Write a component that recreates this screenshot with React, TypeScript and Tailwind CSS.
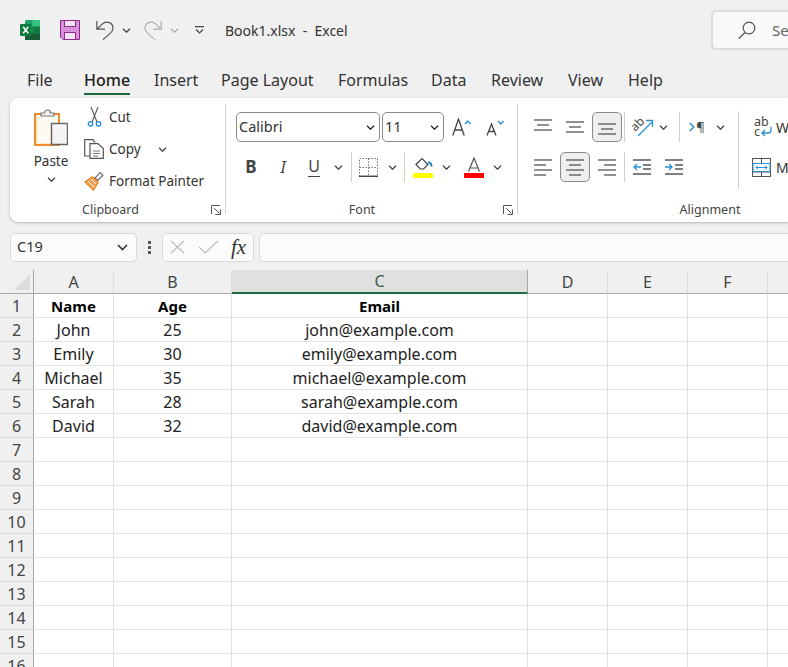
import type { ReactNode } from "react";

const tabs = [
  { label: "File", width: "w-[57px]" },
  { label: "Home", width: "w-[70px]", active: true },
  { label: "Insert", width: "w-[67px]" },
  { label: "Page Layout", width: "w-[117px]" },
  { label: "Formulas", width: "w-[93px]" },
  { label: "Data", width: "w-[60px]" },
  { label: "Review", width: "w-[77px]" },
  { label: "View", width: "w-[60px]" },
  { label: "Help", width: "w-[60px]" },
];

const rows = [
  ["Name", "Age", "Email"],
  ["John", "25", "john@example.com"],
  ["Emily", "30", "emily@example.com"],
  ["Michael", "35", "michael@example.com"],
  ["Sarah", "28", "sarah@example.com"],
  ["David", "32", "david@example.com"],
];

const rowNumbers = Array.from({ length: 16 }, (_, i) => i + 1);

const Chev = ({ color = "#444" }: { readonly color?: string }) => (
  <svg className="shrink-0" fill="none" height="5" viewBox="0 0 9 5" width="9">
    <path d="M1 .7l3.5 3.5L8 .7" stroke={color} strokeWidth="1.3" />
  </svg>
);

const Slot = ({
  width,
  children,
}: {
  readonly width: string;
  readonly children?: ReactNode;
}) => (
  <div className={`flex h-[30px] shrink-0 items-center justify-center ${width}`}>
    {children}
  </div>
);

const Sep = () => <div className="h-[30px] w-px shrink-0 bg-[#d0d0d0]" />;

const Launcher = () => (
  <svg fill="none" height="10" viewBox="0 0 10 10" width="10">
    <path d="M.5 9V.5H9" stroke="#555" />
    <path d="M3 3l5.5 5.5M9.5 4.500v5h-5" stroke="#555" />
  </svg>
);

const GroupLabel = ({
  label,
  launcherWidth,
}: {
  readonly label: string;
  readonly launcherWidth?: string;
}) => (
  <div className="flex items-center text-[12.5px] leading-[16px] text-[#444]">
    <span className="flex-1 text-center">{label}</span>
    {launcherWidth ? (
      <div className={`flex shrink-0 justify-end pr-[4px] ${launcherWidth}`}>
        <Launcher />
      </div>
    ) : null}
  </div>
);

const Lines = ({
  rows: lineRows,
}: {
  readonly rows: readonly (readonly [number, number, number])[];
}) => (
  <svg fill="none" height="18" viewBox="0 0 18 18" width="18">
    {lineRows.map(([x1, x2, y]) => (
      <path d={`M${x1} ${y}H${x2}`} key={`${x1}-${y}`} stroke="#555" strokeWidth="1.3" />
    ))}
  </svg>
);

const ExcelIcon = () => (
  <svg className="shrink-0" height="20" viewBox="0 0 20 20" width="20">
    <rect fill="#21a366" height="20" rx="1.5" width="15" x="5" />
    <rect fill="#33c481" height="6.6" width="7.5" x="12.5" />
    <rect fill="#107c41" height="6.8" width="7.5" x="12.5" y="6.6" />
    <rect fill="#185c37" height="6.6" width="15" x="5" y="13.4" />
    <rect fill="#107c41" height="12" rx="1" width="11.5" x="0" y="4" />
    <path d="M3.2 6.800l2.500 3.200-2.500 3.200M8.300 6.800L5.700 10l2.600 3.200" fill="none" stroke="#fff" strokeWidth="1.5" />
  </svg>
);

const SaveIcon = () => (
  <svg className="shrink-0" height="20" viewBox="0 0 20 20" width="20">
    <path d="M.5.500h19v19H3l-2.500-2.500z" fill="#d98fd9" stroke="#8f2a8f" />
    <rect fill="#f4e4f4" height="6" stroke="#8f2a8f" width="11" x="4.500" y=".5" />
    <rect fill="#f4e4f4" height="7" stroke="#8f2a8f" width="11" x="4.500" y="12.500" />
  </svg>
);

const UndoIcon = ({
  color,
  flip = false,
}: {
  readonly color: string;
  readonly flip?: boolean;
}) => (
  <svg className={flip ? "shrink-0 -scale-x-100" : "shrink-0"} fill="none" height="20" viewBox="0 0 18 20" width="18">
    <path d="M.8 1v8.200H9M.8 9.200L7 3.400c4-3 10-.5 10 4.600 0 2.600-1.300 4-3 5.600L7 19.600" stroke={color} strokeWidth="1.2" />
  </svg>
);

const PasteIcon = () => (
  <svg fill="none" height="39" viewBox="0 0 34 39" width="34">
    <path d="M1 6h24v31H1z" fill="#fde9c9" stroke="#ed8b2e" strokeWidth="2" />
    <path d="M4 7h20v28H4z" fill="#fff" opacity=".75" />
    <path d="M7 8V5h3.500a3 3 0 016 0H20v3z" fill="#f3f3f3" stroke="#777" strokeWidth="1.2" />
    <path d="M17.500 15.500h16v21h-16z" fill="#f5f5f5" stroke="#666" strokeWidth="1.5" />
  </svg>
);

const CutIcon = () => (
  <svg fill="none" height="20" viewBox="0 0 15 20" width="15">
    <path d="M4 0l6 15M11 0L5 15" stroke="#555" strokeWidth="1.1" />
    <circle cx="3.500" cy="16.800" r="2.200" stroke="#2b8fd6" strokeWidth="1.3" />
    <circle cx="11.500" cy="16.800" r="2.200" stroke="#2b8fd6" strokeWidth="1.3" />
  </svg>
);

const CopyIcon = () => (
  <svg fill="none" height="20" viewBox="0 0 20 20" width="20">
    <path d="M6 17H.7V.7H9l2 3" stroke="#555" strokeWidth="1.2" />
    <path d="M6 4.600h8l5.300 5v9.700H6z" fill="#fff" stroke="#555" strokeWidth="1.2" />
    <path d="M9 12h7M9 14.500h7M9 17h5" stroke="#777" />
  </svg>
);

const PainterIcon = () => (
  <svg fill="none" height="19" viewBox="0 0 20 19" width="20">
    <path d="M11 6l3-3 2-2.500 3 2.800-2.400 2.200-3 3z" fill="#fff" stroke="#666" strokeWidth="1.1" />
    <path d="M.5 10L8.500 4.500l6 5.500-5 8.500z" fill="#f2a04c" stroke="#e27a1d" strokeWidth="1" />
    <path d="M4 9l6 6M7 7l5 5" stroke="#fff" strokeWidth="1" />
  </svg>
);

const GrowIcon = ({ up }: { readonly up: boolean }) => (
  <svg fill="none" height="18" viewBox="0 0 20 18" width="20">
    <path d={up ? "M.8 17.500L6.500 1l5.700 16.500M2.600 12h7.800" : "M1 17.500L5.500 6 10 17.500M2.500 13.500h6"} stroke="#444" strokeWidth="1.3" />
    <path d={up ? "M13 6l2.700-3 2.800 3" : "M12 3l2.700 3L17.500 3"} stroke="#2b8fd6" strokeWidth="1.4" />
  </svg>
);

const BorderIcon = () => (
  <svg fill="none" height="19" viewBox="0 0 19 19" width="19">
    <path d="M.5.500h18v18H.5zM9.500.500v18M.5 9.500h18" stroke="#777" strokeDasharray="1.500 1.500" />
    <path d="M0 18.300h19" stroke="#444" strokeWidth="1.500" />
  </svg>
);

const FillIcon = () => (
  <svg fill="none" height="21" viewBox="0 0 20 21" width="20">
    <path d="M3 7.500L9 1.500l6 6-4.500 4.500h-3z" stroke="#444" strokeWidth="1.200" />
    <path d="M15 5.500c2-.5 3.500 1 3.500 4" stroke="#1f7fc4" strokeWidth="2" />
    <rect fill="#ffff00" height="5" width="20" y="16" />
  </svg>
);

const ColorIcon = () => (
  <svg fill="none" height="21" viewBox="0 0 20 21" width="20">
    <path d="M4.500 14.500L10 1l5.500 13.500M6 11h8" stroke="#555" strokeWidth="1.200" />
    <rect fill="#ff0000" height="5" width="20" y="16" />
  </svg>
);

const OrientIcon = () => (
  <svg className="overflow-visible" fill="none" height="20" viewBox="0 0 21 20" width="21">
    <text fill="#444" fontFamily="Noto Sans, sans-serif" fontSize="12" textAnchor="middle" transform="rotate(-45 6 8)" x="6" y="11">
      ab
    </text>
    <path d="M6 19L20 5M14 3.500h6.500V10" stroke="#2b8fd6" strokeWidth="1.300" />
  </svg>
);

const IndentIcon = ({ flip }: { readonly flip: boolean }) => (
  <svg fill="none" height="18" viewBox="0 0 18 18" width="18">
    <path d="M0 2h18M10 7h8M10 11h8M0 16h18" stroke="#555" strokeWidth="1.300" />
    <path d={flip ? "M8 9H1M4 6L1 9l3 3" : "M0 9h7M4 6l3 3-3 3"} stroke="#2b8fd6" strokeWidth="1.300" />
  </svg>
);

const WrapIcon = () => (
  <svg className="overflow-visible" fill="none" height="20" viewBox="0 0 18 20" width="18">
    <text fill="#444" fontFamily="Noto Sans, sans-serif" fontSize="12.500">
      <tspan x="0" y="9">
        ab
      </tspan>
      <tspan x="0" y="19">
        c
      </tspan>
    </text>
    <path d="M17 10v3c0 2-1 3-3 3H8M11 13l-3 3 3 3" stroke="#2b8fd6" strokeWidth="1.300" />
  </svg>
);

const MergeIcon = () => (
  <svg fill="none" height="19" viewBox="0 0 19 19" width="19">
    <rect fill="#fff" height="18" stroke="#555" width="18" x=".5" y=".5" />
    <path d="M1 5.500h17M1 14h17M9.500 1v4M9.500 14v4" stroke="#555" />
    <rect height="8" stroke="#2b8fd6" width="17" x="1" y="5.500" />
    <path d="M4 9.500h11M6 7.500l-2 2 2 2M13 7.500l2 2-2 2" stroke="#2b8fd6" />
  </svg>
);

const ClipboardGroup = () => (
  <div className="mt-[6px] h-[110px] w-[216px] shrink-0 border-r border-[#d0d0d0]">
    <div className="flex h-[98px] pl-[20px]">
      <div className="flex w-[42px] flex-col items-center pt-[4px]">
        <PasteIcon />
        <span className="mt-[5px] text-[13.5px] leading-[18px]">Paste</span>
        <div className="mt-[7px]">
          <Chev />
        </div>
      </div>
      <div className="ml-[12px] flex flex-col gap-[6px] text-[13.5px]">
        <div className="flex h-[26px] items-center">
          <div className="flex w-[20px] justify-center">
            <CutIcon />
          </div>
          <span className="ml-[5px]">Cut</span>
        </div>
        <div className="flex h-[26px] items-center">
          <div className="flex w-[20px] justify-center">
            <CopyIcon />
          </div>
          <span className="ml-[5px]">Copy</span>
          <div className="ml-[17px]">
            <Chev />
          </div>
        </div>
        <div className="flex h-[26px] items-center">
          <div className="flex w-[20px] justify-center">
            <PainterIcon />
          </div>
          <span className="ml-[5px] whitespace-nowrap">Format Painter</span>
        </div>
      </div>
    </div>
    <GroupLabel label="Clipboard" launcherWidth="w-[14px]" />
  </div>
);

const FakeSelect = ({
  value,
  width,
}: {
  readonly value: string;
  readonly width: string;
}) => (
  <div
    className={`flex h-[30px] shrink-0 items-center justify-between rounded-[5px] border border-[#8a8a8a] pl-[2px] pr-[4px] text-[14.5px] text-[#333] ${width}`}
  >
    <span>{value}</span>
    <Chev color="#222" />
  </div>
);

const FontGroup = () => (
  <div className="mt-[6px] h-[110px] w-[292px] shrink-0 border-r border-[#d0d0d0]">
    <div className="h-[98px] pl-[10px] pt-[8px]">
      <div className="flex items-center">
        <FakeSelect value="Calibri" width="w-[144px]" />
        <div className="ml-[2px]">
          <FakeSelect value="11" width="w-[62px]" />
        </div>
        <div className="ml-[8px]">
          <GrowIcon up />
        </div>
        <div className="ml-[14px]">
          <GrowIcon up={false} />
        </div>
      </div>
      <div className="mt-[10px] flex items-center text-[#444]">
        <Slot width="w-[30px]">
          <span className="text-[17px] font-bold">B</span>
        </Slot>
        <Slot width="w-[34px]">
          <span className="text-[16px] italic">I</span>
        </Slot>
        <Slot width="w-[28px]">
          <span className="border-b border-[#444] text-[16px] leading-[19px]">U</span>
        </Slot>
        <Slot width="w-[20px]">
          <Chev />
        </Slot>
        <div className="ml-[3px]">
          <Sep />
        </div>
        <Slot width="w-[33px]">
          <BorderIcon />
        </Slot>
        <Slot width="w-[14px]">
          <Chev />
        </Slot>
        <div className="ml-[5px]">
          <Sep />
        </div>
        <Slot width="w-[36px]">
          <FillIcon />
        </Slot>
        <Slot width="w-[10px]">
          <Chev />
        </Slot>
        <div className="ml-[5px]">
          <Slot width="w-[36px]">
            <ColorIcon />
          </Slot>
        </div>
        <Slot width="w-[10px]">
          <Chev />
        </Slot>
      </div>
    </div>
    <GroupLabel label="Font" launcherWidth="w-[19px]" />
  </div>
);

const AlignmentGroup = () => (
  <div className="mt-[6px] h-[110px] w-[384px] shrink-0">
    <div className="flex h-[98px]">
      <div className="w-[220px] shrink-0 pl-[10px] pt-[8px]">
        <div className="flex items-center">
          <Slot width="w-[30px]">
            <Lines rows={[[0, 18, 2], [3, 15, 7], [0, 18, 12]]} />
          </Slot>
          <Slot width="w-[34px]">
            <Lines rows={[[0, 18, 4], [3, 15, 9], [0, 18, 14]]} />
          </Slot>
          <div className="flex h-[30px] w-[30px] items-center justify-center rounded-[5px] border border-[#8a8a8a] bg-[#efefef]">
            <Lines rows={[[0, 18, 6], [3, 15, 11], [0, 18, 16]]} />
          </div>
          <div className="ml-[2px]">
            <Sep />
          </div>
          <Slot width="w-[34px]">
            <OrientIcon />
          </Slot>
          <Slot width="w-[8px]">
            <Chev />
          </Slot>
          <div className="ml-[12px]">
            <Sep />
          </div>
          <Slot width="w-[34px]">
            <svg fill="none" height="10" viewBox="0 0 6 10" width="6">
              <path d="M.8 1l4 4-4 4" stroke="#2b8fd6" strokeWidth="1.500" />
            </svg>
            <span className="ml-[1px] text-[13px] leading-none text-[#444]">¶</span>
          </Slot>
          <Slot width="w-[12px]">
            <Chev />
          </Slot>
        </div>
        <div className="mt-[10px] flex items-center">
          <Slot width="w-[30px]">
            <Lines rows={[[0, 18, 2], [0, 12, 7], [0, 18, 12], [0, 12, 17]]} />
          </Slot>
          <div className="ml-[2px] flex h-[30px] w-[30px] items-center justify-center rounded-[5px] border border-[#8a8a8a] bg-[#efefef]">
            <Lines rows={[[0, 18, 2], [3, 15, 7], [0, 18, 12], [3, 15, 17]]} />
          </div>
          <Slot width="w-[34px]">
            <Lines rows={[[0, 18, 2], [6, 18, 7], [0, 18, 12], [6, 18, 17]]} />
          </Slot>
          <Sep />
          <Slot width="w-[34px]">
            <IndentIcon flip />
          </Slot>
          <Slot width="w-[30px]">
            <IndentIcon flip={false} />
          </Slot>
        </div>
      </div>
      <div className="mt-[7px] h-[78px] w-px shrink-0 bg-[#d0d0d0]" />
      <div className="flex flex-col gap-[10px] pl-[13px] pt-[1px] text-[14px]">
        <div className="mt-[7px] flex h-[30px] items-center">
          <div className="w-[24px] pl-[2px]">
            <WrapIcon />
          </div>
          <span className="whitespace-nowrap">Wrap Text</span>
        </div>
        <div className="flex h-[30px] items-center">
          <div className="w-[24px]">
            <MergeIcon />
          </div>
          <span className="whitespace-nowrap">Merge &amp; Center</span>
        </div>
      </div>
    </div>
    <GroupLabel label="Alignment" />
  </div>
);

const FormulaBar = () => (
  <div className="mt-[10px] flex h-[30px] shrink-0 items-center pl-[10px]">
    <div className="flex h-[29px] w-[127px] shrink-0 items-center justify-between rounded-[5px] border border-[#d9d9d9] bg-[#fbfbfb] pl-[6px] pr-[8px] text-[14.5px] text-[#333]">
      <span>C19</span>
      <svg fill="none" height="7" viewBox="0 0 11 7" width="11">
        <path d="M1 1l4.500 4.500L10 1" stroke="#333" strokeWidth="1.600" />
      </svg>
    </div>
    <div className="ml-[11px] flex w-[3px] shrink-0 flex-col gap-[2px]">
      <div className="h-[3px] bg-[#555]" />
      <div className="h-[3px] bg-[#555]" />
      <div className="h-[3px] bg-[#555]" />
    </div>
    <div className="ml-[11px] flex h-[29px] w-[92px] shrink-0 items-center rounded-[5px] border border-[#d9d9d9] bg-[#fbfbfb] pl-[7px]">
      <svg className="shrink-0" fill="none" height="14" viewBox="0 0 15 14" width="15">
        <path d="M1 1l13 12M14 1L1 13" stroke="#bdbdbd" strokeWidth="1.200" />
      </svg>
      <svg className="ml-[13px] shrink-0" fill="none" height="14" viewBox="0 0 21 14" width="21">
        <path d="M1 7l6 6L20 1" stroke="#bdbdbd" strokeWidth="1.200" />
      </svg>
      <span className="ml-[12px] font-['Liberation_Serif',serif] text-[21px] italic leading-none text-[#333]">
        fx
      </span>
    </div>
    <div className="ml-[5px] h-[29px] flex-1 rounded-l-[5px] border border-r-0 border-[#d9d9d9] bg-[#fbfbfb]" />
  </div>
);

const colClass =
  "grid-cols-[34px_80px_118px_296px_80px_80px_80px_80px] grid-rows-[24px]";

const Sheet = () => (
  <div className="mt-[8px] w-[848px] shrink-0">
    <div className={`grid h-[24px] ${colClass}`}>
      <div className="flex items-end justify-end border-b border-r border-[#a8a8a8] pb-[3px] pr-[3px]">
        <svg height="16" viewBox="0 0 16 16" width="16">
          <path d="M16 0v16H0z" fill="#dcdcdc" />
        </svg>
      </div>
      {["A", "B", "C", "D", "E", "F", "G"].map((col) => (
        <div
          className={
            col === "C"
              ? "flex items-center justify-center border-b-2 border-r border-b-[#1e6e42] border-r-[#a8a8a8] bg-[#e0e0e0] text-[16px] leading-[20px] text-[#3d6046]"
              : "flex items-center justify-center border-b border-r border-b-[#a8a8a8] border-r-[#dcdcdc] text-[16px] leading-[20px] text-[#444]"
          }
          key={col}
        >
          {col === "G" ? "" : col}
        </div>
      ))}
    </div>
    {rowNumbers.map((n) => (
      <div className={`grid h-[24px] ${colClass}`} key={n}>
        <div className="flex items-center justify-center border-b border-r border-b-[#dcdcdc] border-r-[#a8a8a8] text-[16px] leading-[20px] text-[#444]">
          {n}
        </div>
        {[0, 1, 2, 3, 4, 5, 6].map((c) => (
          <div
            className={`flex items-center justify-center border-b border-r border-[#e1e1e1] bg-white leading-[20px] ${
              n === 1 ? "text-[15px] font-bold text-black" : "text-[16px] text-[#222]"
            }`}
            key={c}
          >
            {rows[n - 1]?.[c] ?? ""}
          </div>
        ))}
      </div>
    ))}
  </div>
);

const App = () => (
  <div className="flex h-[667px] w-[788px] flex-col overflow-hidden bg-[#f0f0f0] font-['Noto_Sans',sans-serif] text-[#333]">
    {/* title bar */}
    <div className="flex h-[60px] shrink-0 items-center pl-[20px]">
      <ExcelIcon />
      <div className="ml-[20px] shrink-0">
        <SaveIcon />
      </div>
      <div className="ml-[16px] shrink-0">
        <UndoIcon color="#555" />
      </div>
      <div className="ml-[8px] shrink-0">
        <Chev />
      </div>
      <div className="ml-[13px] shrink-0">
        <UndoIcon color="#b0b0b0" flip />
      </div>
      <div className="ml-[8px] shrink-0">
        <Chev color="#b0b0b0" />
      </div>
      <svg className="ml-[16px] shrink-0" fill="none" height="9" viewBox="0 0 9 9" width="9">
        <path d="M0 .7h9M1 3.500l3.500 3.500L8 3.500" stroke="#444" strokeWidth="1.200" />
      </svg>
      <span className="ml-[21px] w-[125px] shrink-0 whitespace-pre text-[14px]">Book1.xlsx  -  Excel</span>
      <div className="ml-[361px] flex h-[40px] w-[200px] shrink-0 items-center rounded-l-[5px] border-2 border-r-0 border-[#dcdcdc] bg-[#f9f9f9] pl-[25px] text-[15px] text-[#666]">
        <svg className="shrink-0" fill="none" height="18" viewBox="0 0 18 18" width="18">
          <circle cx="11" cy="7" r="5.800" stroke="#555" strokeWidth="1.200" />
          <path d="M7 11.500L.8 17.500" stroke="#555" strokeWidth="1.300" />
        </svg>
        <span className="ml-[16px]">Search</span>
      </div>
    </div>

    {/* tabs */}
    <div className="flex h-[38px] shrink-0 pl-[27px]">
      {tabs.map((tab) => (
        <div className={`shrink-0 ${tab.width}`} key={tab.label}>
          <div className="inline-flex h-[35px] flex-col justify-between pt-[7px]">
            <span
              className={`whitespace-nowrap text-[16px] leading-[26px] ${
                tab.active ? "font-medium text-[#222]" : ""
              }`}
            >
              {tab.label}
            </span>
            {tab.active ? <div className="h-[2px] bg-[#1a6b3c]" /> : null}
          </div>
        </div>
      ))}
    </div>

    {/* ribbon */}
    <div className="ml-[10px] flex h-[124px] shrink-0 rounded-l-[8px] bg-white shadow-[0_1px_3px_rgba(0,0,0,0.25)]">
      <ClipboardGroup />
      <FontGroup />
      <AlignmentGroup />
    </div>

    <FormulaBar />
    <Sheet />
  </div>
);

export default App;
